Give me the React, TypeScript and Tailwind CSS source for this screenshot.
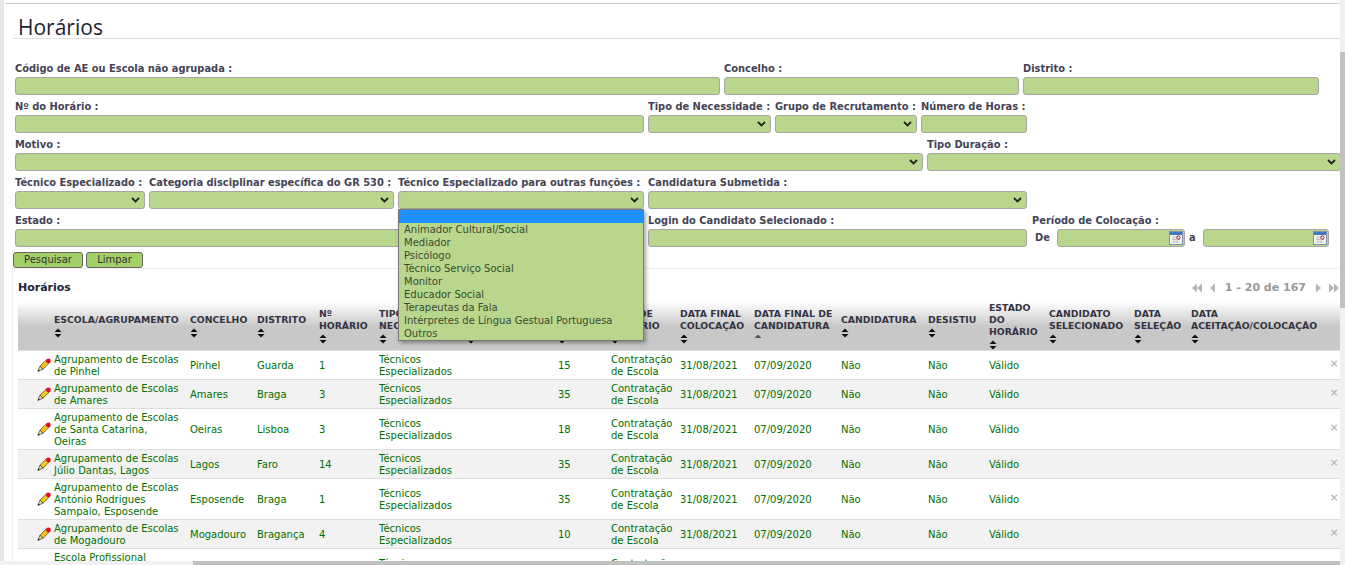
const inputCls = "h-[18px] bg-[#b9d78c] border border-[#a5a5a5] rounded-[3px] box-border";

function Chevron() {
  return (
    <svg width="9" height="6" viewBox="0 0 9 6" className="text-[#222]">
      <path d="M1 1l3.5 3.5L8 1" fill="none" stroke="currentColor" strokeWidth="1.8" />
    </svg>
  );
}

function SelectBox({ w }: { w: number | string }) {
  return (
    <div className={`${inputCls} flex items-center justify-end pr-[4px] shrink-0`} style={{ width: w }}>
      <Chevron />
    </div>
  );
}

function Field({ label, w, select }: { label: string; w: number; select?: boolean }) {
  return (
    <div className="shrink-0" style={{ width: w }}>
      <div className="h-5 leading-[24px] font-bold text-[#444455] text-[9.9px] whitespace-nowrap">{label}</div>
      {select ? <SelectBox w={w} /> : <div className={inputCls} style={{ width: w }} />}
    </div>
  );
}

function CalendarIcon() {
  return (
    <svg width="14" height="14" viewBox="0 0 14 14" className="shrink-0">
      <rect x="0.5" y="0.5" width="13" height="13" fill="#f4f4f4" stroke="#7f8fa8" />
      <rect x="1" y="1" width="12" height="3" fill="#3f78c8" />
      <path d="M3 6h8M3 8.5h8M3 11h8M5 5v7M8 5v7" stroke="#c4c4c4" strokeWidth="1" />
      <circle cx="9.5" cy="6.5" r="1.6" fill="#fff" stroke="#a01010" strokeWidth="1" />
    </svg>
  );
}

function DateBox({ w }: { w: number }) {
  return (
    <div className={`${inputCls} flex items-center justify-end pr-[1px] shrink-0`} style={{ width: w }}>
      <CalendarIcon />
    </div>
  );
}

function SortIcon({ onlyUp }: { onlyUp?: boolean }) {
  return (
    <svg width="8" height="10" viewBox="0 0 8 10" className="block mt-[2px]">
      <path d="M4 0.5L7.5 4H0.5z" fill={onlyUp ? "#555" : "#111"} />
      {!onlyUp && <path d="M4 9.5L7.5 6H0.5z" fill="#111" />}
    </svg>
  );
}

function Pencil() {
  return (
    <svg width="14" height="14" viewBox="0 0 14 14" className="shrink-0">
      <path d="M3 8.2L9.4 1.8l3 3L6 11.2z" fill="#f6c71c" stroke="#6b5000" strokeWidth="0.8" />
      <path d="M3 8.2L0.8 13.4 6 11.2z" fill="#e8d9a0" stroke="#222" strokeWidth="0.6" />
      <path d="M1.6 11.4L0.8 13.4l2-0.8z" fill="#111" />
      <circle cx="11.4" cy="3" r="2.4" fill="#d8102a" />
    </svg>
  );
}

function PagerArrow({ dir, double }: { dir: "l" | "r"; double?: boolean }) {
  const tri = dir === "l" ? "M6 0.5v9L1 5z" : "M1 0.5v9L6 5z";
  return (
    <svg width={double ? 12 : 7} height="10" viewBox={double ? "0 0 12 10" : "0 0 7 10"}>
      <path d={tri} fill="#b5b5b5" />
      {double && <path d={tri} transform="translate(5 0)" fill="#b5b5b5" />}
    </svg>
  );
}

const headers: { lines: string[]; up?: boolean }[] = [
  { lines: [] },
  { lines: ["ESCOLA/AGRUPAMENTO"] },
  { lines: ["CONCELHO"] },
  { lines: ["DISTRITO"] },
  { lines: ["Nº", "HORÁRIO"] },
  { lines: ["TIPO DE", "NECESSIDADE"] },
  { lines: ["GRUPO DE", "RECRUTAMENTO"] },
  { lines: ["Nº DE", "HORAS"] },
  { lines: ["TIPO DE", "HORÁRIO"] },
  { lines: ["DATA FINAL", "COLOCAÇÃO"] },
  { lines: ["DATA FINAL DE", "CANDIDATURA"], up: true },
  { lines: ["CANDIDATURA"] },
  { lines: ["DESISTIU"] },
  { lines: ["ESTADO", "DO", "HORÁRIO"] },
  { lines: ["CANDIDATO", "SELECIONADO"] },
  { lines: ["DATA", "SELEÇÃO"] },
  { lines: ["DATA", "ACEITAÇÃO/COLOCAÇÃO"] },
  { lines: [] },
];

const widths = [36, 136, 67, 62, 60, 88, 91, 53, 69, 74, 87, 87, 61, 60, 85, 57, 137, 12];

const rows = [
  { school: ["Agrupamento de Escolas", "de Pinhel"], concelho: "Pinhel", distrito: "Guarda", num: "1", horas: "15" },
  { school: ["Agrupamento de Escolas", "de Amares"], concelho: "Amares", distrito: "Braga", num: "3", horas: "35" },
  { school: ["Agrupamento de Escolas", "de Santa Catarina,", "Oeiras"], concelho: "Oeiras", distrito: "Lisboa", num: "3", horas: "18" },
  { school: ["Agrupamento de Escolas", "Júlio Dantas, Lagos"], concelho: "Lagos", distrito: "Faro", num: "14", horas: "35" },
  { school: ["Agrupamento de Escolas", "António Rodrigues", "Sampaio, Esposende"], concelho: "Esposende", distrito: "Braga", num: "1", horas: "35" },
  { school: ["Agrupamento de Escolas", "de Mogadouro"], concelho: "Mogadouro", distrito: "Bragança", num: "4", horas: "10" },
  { school: ["Escola Profissional", "\u00a0", "\u00a0"], concelho: "", distrito: "", num: "", horas: "" },
];

const dropdownItems = [
  "Animador Cultural/Social",
  "Mediador",
  "Psicólogo",
  "Técnico Serviço Social",
  "Monitor",
  "Educador Social",
  "Terapeutas da Fala",
  "Intérpretes de Língua Gestual Portuguesa",
  "Outros",
];

export default function App() {
  return (
    <div className="relative w-[1345px] h-[565px] overflow-hidden bg-white font-['DejaVu_Sans','Liberation_Sans',sans-serif]">
      {/* left page background */}
      <div className="absolute left-0 top-0 w-[4px] h-full bg-[#e6e6e6]" />

      <div className="pl-[5px]">
        <div className="h-[3px]" />
        <div className="h-px bg-[#cccccc] w-[1335px]" />

        {/* Title */}
        <div className="ml-[8px] w-[1327px] h-[35px] border-b border-[#dddddd] pl-[5px]">
          <h1 className="font-['Open_Sans',sans-serif] text-[21px] leading-[46px] text-[#222233]">Horários</h1>
        </div>

        {/* Search form */}
        <div className="pl-[10px] pt-[18px] w-[1340px] overflow-hidden">
          <div className="flex gap-1 h-[38px]">
            <Field label="Código de AE ou Escola não agrupada :" w={705} />
            <Field label="Concelho :" w={295} />
            <Field label="Distrito :" w={296} />
          </div>
          <div className="flex gap-1 h-[38px]">
            <Field label="Nº do Horário :" w={629} />
            <Field label="Tipo de Necessidade :" w={123} select />
            <Field label="Grupo de Recrutamento :" w={142} select />
            <Field label="Número de Horas :" w={106} />
          </div>
          <div className="flex gap-1 h-[38px]">
            <Field label="Motivo :" w={908} select />
            <Field label="Tipo Duração :" w={414} select />
          </div>
          <div className="flex gap-1 h-[38px]">
            <Field label="Técnico Especializado :" w={130} select />
            <Field label="Categoria disciplinar específica do GR 530 :" w={245} select />
            <Field label="Técnico Especializado para outras funções :" w={246} select />
            <Field label="Candidatura Submetida :" w={379} select />
          </div>
          <div className="flex gap-1 h-[38px]">
            <Field label="Estado :" w={629} />
            <Field label="Login do Candidato Selecionado :" w={379} />
            <div className="ml-[1px]">
              <div className="h-5 leading-[24px] font-bold text-[#444455] text-[9.9px] whitespace-nowrap">Período de Colocação :</div>
              <div className="flex items-center text-[9.9px] font-bold text-[#444455]">
                <span className="ml-[3px] w-[22px]">De</span>
                <DateBox w={128} />
                <span className="ml-[4px] w-[14px]">a</span>
                <DateBox w={126} />
              </div>
            </div>
          </div>

          <div className="flex gap-[3px] -ml-[2px] mt-[5px]">
            <button className="w-[70px] h-[16px] bg-[#a2d066] border border-[#666] rounded-[3px] text-[10px] leading-none text-[#333]">Pesquisar</button>
            <button className="w-[57px] h-[16px] bg-[#a2d066] border border-[#666] rounded-[3px] text-[10px] leading-none text-[#333]">Limpar</button>
          </div>
        </div>

        {/* Results */}
        <div className="ml-[7px] w-[1328px] border-t border-l border-[#eeeeee] pl-[5px]">
          <div className="flex items-center justify-between h-[33px] pt-[5px]">
            <h2 className="text-[11px] font-bold text-[#222233]">Horários</h2>
            <div className="flex items-center gap-[6px]">
              <PagerArrow dir="l" double />
              <PagerArrow dir="l" />
              <span className="mx-[3px] text-[11px] font-bold text-[#999999] whitespace-nowrap">1 - 20 de 167</span>
              <PagerArrow dir="r" />
              <PagerArrow dir="r" double />
            </div>
          </div>

          <table className="table-fixed border-collapse w-[1322px] text-[10px] leading-[12px] text-[#007000]">
            <colgroup>
              {widths.map((w, i) => (
                <col key={i} style={{ width: w }} />
              ))}
            </colgroup>
            <thead>
              <tr className="h-[48px] bg-gradient-to-b from-white to-[#c8c8c8] to-50%">
                {headers.map((h, i) => (
                  <th key={i} className="text-left align-middle p-0 font-bold text-[9.3px] leading-[12px] text-[#333344] whitespace-nowrap">
                    {h.lines.map((l) => (
                      <div key={l}>{l}</div>
                    ))}
                    {h.lines.length > 0 && <SortIcon onlyUp={h.up} />}
                  </th>
                ))}
              </tr>
            </thead>
            <tbody>
              {rows.map((r, i) => (
                <tr key={i} className={`border-t border-[#dddddd] ${i % 2 === 1 ? "bg-[#f2f2f2]" : "bg-white"}`}>
                  <td className="p-0 align-middle">
                    <div className="flex justify-end pr-[3px] -mt-[1px]">
                      <Pencil />
                    </div>
                  </td>
                  <td className="pt-[3px] pb-[1px] px-0 align-middle">
                    {r.school.map((l, k) => (
                      <div key={k} className="whitespace-nowrap">{l}</div>
                    ))}
                  </td>
                  <td className="pt-[2px] pb-0 px-0 align-middle">{r.concelho}</td>
                  <td className="pt-[2px] pb-0 px-0 align-middle">{r.distrito}</td>
                  <td className="pt-[2px] pb-0 px-0 align-middle">{r.num}</td>
                  <td className="pt-[2px] pb-0 px-0 align-middle">
                    Técnicos
                    <br />
                    Especializados
                  </td>
                  <td className="p-0" />
                  <td className="pt-[2px] pb-0 px-0 align-middle">{r.horas}</td>
                  <td className="pt-[2px] pb-0 px-0 align-middle">
                    Contratação
                    <br />
                    de Escola
                  </td>
                  <td className="pt-[2px] pb-0 px-0 align-middle">31/08/2021</td>
                  <td className="pt-[2px] pb-0 px-0 align-middle">07/09/2020</td>
                  <td className="pt-[2px] pb-0 px-0 align-middle">Não</td>
                  <td className="pt-[2px] pb-0 px-0 align-middle">Não</td>
                  <td className="pt-[2px] pb-0 px-0 align-middle">Válido</td>
                  <td className="p-0" />
                  <td className="p-0" />
                  <td className="p-0" />
                  <td className="p-0 align-middle text-center text-[11px] text-[#aaaaaa]">
                    <div className="-mt-[3px]">×</div>
                  </td>
                </tr>
              ))}
            </tbody>
          </table>
        </div>
      </div>

      {/* open dropdown */}
      <div className="absolute left-[398px] top-[209px] w-[246px] h-[132px] bg-[#b9d78c] border border-[#777777] shadow-[2px_2px_4px_rgba(0,0,0,0.35)] text-[10px] leading-[13px] text-[#3a4a33]">
        <div className="h-[13px] bg-[#1e90ff]" />
        {dropdownItems.map((item) => (
          <div key={item} className="pl-[5px] whitespace-nowrap">{item}</div>
        ))}
      </div>

      {/* page scrollbars */}
      <div className="absolute right-0 top-0 w-[5px] h-full bg-[#f1f1f1]">
        <div className="mt-[52px] h-[256px] bg-[#c1c1c1]" />
      </div>
      <div className="absolute left-0 bottom-0 w-full h-[4px] bg-[#f1f1f1]">
        <div className="ml-[193px] w-[1147px] h-full bg-[#c1c1c1]" />
      </div>
    </div>
  );
}
